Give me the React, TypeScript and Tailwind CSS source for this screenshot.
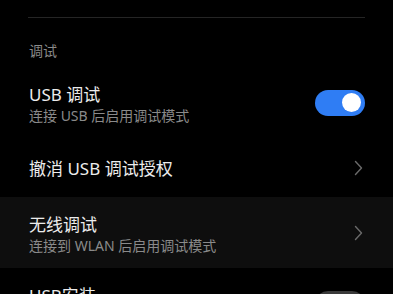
import React from 'react';

const font = { fontFamily: '"Noto Sans", "Noto Sans CJK SC", sans-serif' };

function Chevron() {
  return (
    <svg width="9" height="16" viewBox="0 0 9 16" className="mr-[2px] shrink-0">
      <polyline points="1.5,1.5 7.5,8 1.5,14.5" fill="none" stroke="#6a6a6a" strokeWidth="1.4" strokeLinecap="round" strokeLinejoin="round" />
    </svg>
  );
}

function Toggle({ on }: { on: boolean }) {
  return (
    <div
      className={`relative w-[50px] h-[26px] rounded-full shrink-0 ${on ? 'bg-[#2f7df4]' : 'bg-[#3a3a3a]'}`}
    >
      <span
        className={`absolute top-[3.5px] h-[19px] w-[19px] rounded-full ${on ? 'right-[4px] bg-white' : 'left-[4px] bg-[#8a8a8a]'}`}
      />
    </div>
  );
}

function Row({
  title,
  subtitle,
  right,
  highlight,
}: {
  title: string;
  subtitle?: string;
  right: React.ReactNode;
  highlight?: boolean;
}) {
  return (
    <div
      className={`flex items-center justify-between pl-[29px] pr-[28px] ${subtitle ? 'h-[71px]' : 'h-[59px]'} ${
        highlight ? 'bg-[#0e0e0e]' : ''
      }`}
    >
      <div className="flex flex-col pt-[3px]">
        <span className="text-[17px] leading-[22px] text-[#ececec]">{title}</span>
        {subtitle && <span className="text-[14px] leading-[19px] text-[#8a8a8a]">{subtitle}</span>}
      </div>
      {right}
    </div>
  );
}

export default function App() {
  return (
    <div className="w-[393px] h-[294px] overflow-hidden bg-black" style={font}>
      <div className="pt-[17px]">
        <div className="mx-[28px] border-t border-[#252525]" />
      </div>
      <div className="h-[49px] flex items-center pl-[29px] pt-[15px]">
        <span className="text-[14px] text-[#8a8a8a]">调试</span>
      </div>
      <Row title="USB 调试" subtitle="连接 USB 后启用调试模式" right={<Toggle on />} />
      <Row title="撤消 USB 调试授权" right={<Chevron />} />
      <Row title="无线调试" subtitle="连接到 WLAN 后启用调试模式" right={<Chevron />} highlight />
      <Row title="USB安装" subtitle="允许通过 USB 安装应用" right={<Toggle on={false} />} />
    </div>
  );
}
